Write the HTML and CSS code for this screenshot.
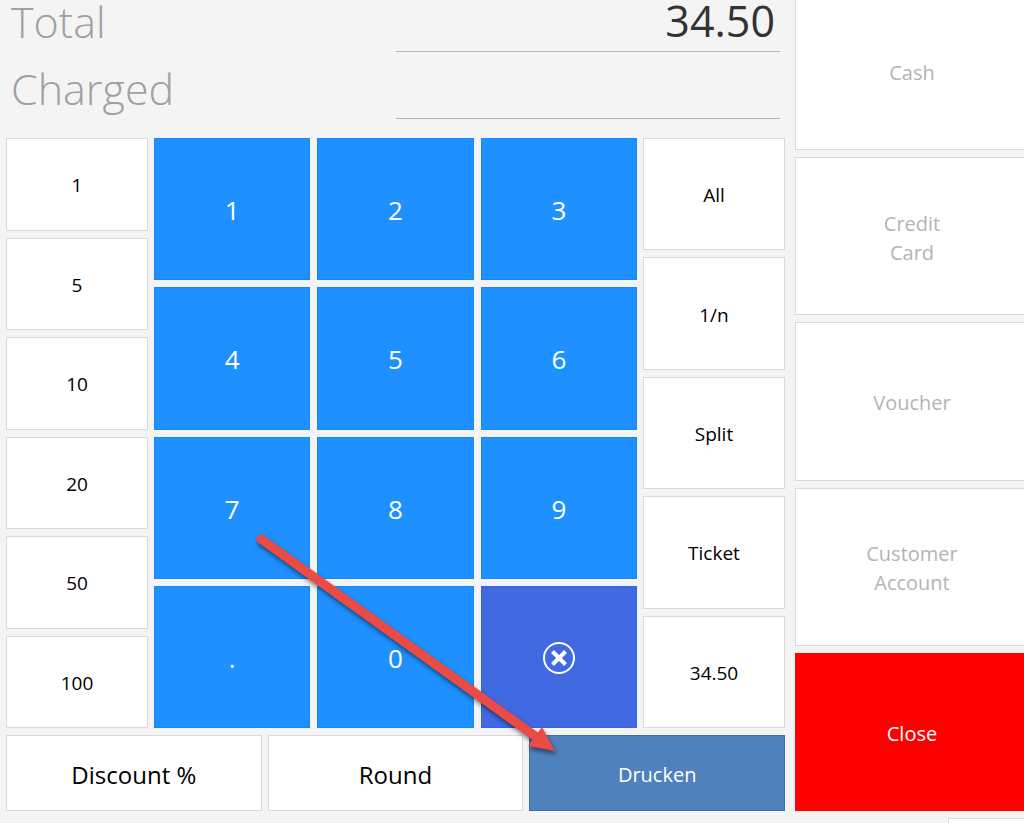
FILE: index.html
```html
<!DOCTYPE html>
<html lang="en">
<head>
    <meta charset="UTF-8">
    <meta name="viewport" content="width=device-width, initial-scale=1.0">
    <title>Payment</title>
    <link rel="stylesheet" href="styles.css">
</head>
<body>

    <div class="screen">
        <main class="register">
            <div class="totals">
                <label for="total">Total</label>
                <input type="text" id="total" value="34.50" readonly>
                <label for="charged">Charged</label>
                <input type="text" id="charged" value="">
            </div>

            <div class="keys">
                <div class="column">
                    <button class="tile">1</button>
                    <button class="tile">5</button>
                    <button class="tile">10</button>
                    <button class="tile">20</button>
                    <button class="tile">50</button>
                    <button class="tile">100</button>
                </div>

                <div class="numpad">
                    <button class="key">1</button>
                    <button class="key">2</button>
                    <button class="key">3</button>
                    <button class="key">4</button>
                    <button class="key">5</button>
                    <button class="key">6</button>
                    <button class="key">7</button>
                    <button class="key">8</button>
                    <button class="key">9</button>
                    <button class="key">.</button>
                    <button class="key">0</button>
                    <button class="key clear" aria-label="Clear">
                        <svg width="32" height="32" viewBox="0 0 32 32" fill="none" stroke="#fff">
                            <circle cx="16" cy="16" r="15" stroke-width="2"/>
                            <path d="M9.5 9.5L22.5 22.5M22.5 9.5L9.5 22.5" stroke-width="4"/>
                        </svg>
                    </button>
                </div>

                <div class="column">
                    <button class="tile">All</button>
                    <button class="tile">1/n</button>
                    <button class="tile">Split</button>
                    <button class="tile">Ticket</button>
                    <button class="tile">34.50</button>
                </div>
            </div>

            <div class="actions">
                <button class="tile large">Discount %</button>
                <button class="tile large">Round</button>
                <button class="tile print">Drucken</button>
            </div>

            <!-- arrow pointing at the print button -->
            <svg class="arrow" width="320" height="240" viewBox="0 0 320 240">
                <path d="M21 19L295 216" stroke="#ea4b44" stroke-width="9" stroke-linecap="round"/>
                <path d="M302 207L315 231L288 226Z" fill="#ea4b44"/>
            </svg>
        </main>

        <aside class="payments">
            <button class="tile" disabled>Cash</button>
            <button class="tile" disabled>Credit<br>Card</button>
            <button class="tile" disabled>Voucher</button>
            <button class="tile" disabled>Customer<br>Account</button>
            <button class="tile close">Close</button>
        </aside>
    </div>

    <div class="bottom-bar">
        <div class="bottom-panel"></div>
    </div>

</body>
</html>
```
FILE: styles.css
```css
* {
    box-sizing: border-box;
}
body {
    margin: 0;
    height: 100vh;
    display: flex;
    flex-direction: column;
    overflow: hidden;
    background-color: #f4f4f4;
    font-family: "Segoe UI", "Open Sans", "Noto Sans", sans-serif;
}
button, input {
    font-family: inherit;
    margin: 0;
    padding: 0;
}
.screen {
    flex: 1;
    min-height: 0;
    display: flex;
    gap: 10px;
}
.register {
    position: relative;
    flex: 1;
    display: flex;
    flex-direction: column;
    gap: 7px;
    padding-left: 6px;
}

/* Total / charged lines */
.totals {
    display: grid;
    grid-template-columns: 1fr 1fr;
    grid-template-rows: 52px 52px;
    row-gap: 15px;
    padding: 0 5px 12px;
}
.totals label {
    color: #a0a0a0;
    font-size: 43px;
    font-weight: 300;
    line-height: 43px;
}
.totals input {
    width: 100%;
    min-width: 0;
    border: none;
    border-bottom: 1px solid #b4b4b4;
    background: none;
    color: #333;
    font-size: 43px;
    line-height: 43px;
    text-align: right;
    padding: 0 5px 10px;
}

/* Buttons */
.keys {
    flex: 1;
    min-height: 0;
    display: grid;
    grid-template-columns: 142px 1fr 142px;
    gap: 6px;
}
.column {
    display: grid;
    grid-auto-rows: 1fr;
    gap: 7px;
}
.tile {
    border: 1px solid #d9d9d9;
    background-color: #fff;
    color: #000;
    font-size: 19px;
    line-height: 29px;
    padding-top: 3px;
}
.large {
    font-size: 24px;
}
.numpad {
    display: grid;
    grid-template-columns: repeat(3, 1fr);
    grid-auto-rows: 1fr;
    gap: 7px;
}
.key {
    border: 1px solid #1687fb;
    background-color: #1e90ff;
    color: #fff;
    font-size: 26px;
    padding-top: 2px;
}
.clear {
    border-color: #3a62de;
    background-color: #4169e1;
}
.clear svg {
    display: block;
    margin: 0 auto;
}
.actions {
    display: grid;
    grid-template-columns: repeat(3, 1fr);
    grid-auto-rows: 76px;
    gap: 6px;
}
.print {
    border-color: #3a70b3;
    background-color: #4f81bd;
    color: #fff;
    font-size: 20px;
}

/* Payment types, runs slightly over the screen edge */
.payments {
    flex: 0 0 234px;
    display: grid;
    grid-auto-rows: 1fr;
    gap: 7px;
    margin: -8px -5px 0 0;
}
.payments .tile {
    font-size: 20px;
}
.payments .tile:disabled {
    color: #b4b4b4;
}
.payments .close {
    border-color: #ff0000;
    background-color: #ff0000;
    color: #fff;
}

.arrow {
    position: absolute;
    left: 240px;
    top: 520px;
    pointer-events: none;
    filter: drop-shadow(1px 3px 2px rgba(0, 0, 0, 0.5));
}

.bottom-bar {
    height: 12px;
    padding-top: 7px;
    display: flex;
    justify-content: flex-end;
}
.bottom-panel {
    width: 76px;
    border: 1px solid #d9d9d9;
    border-width: 1px 0 0 1px;
    background-color: #fff;
}
```
